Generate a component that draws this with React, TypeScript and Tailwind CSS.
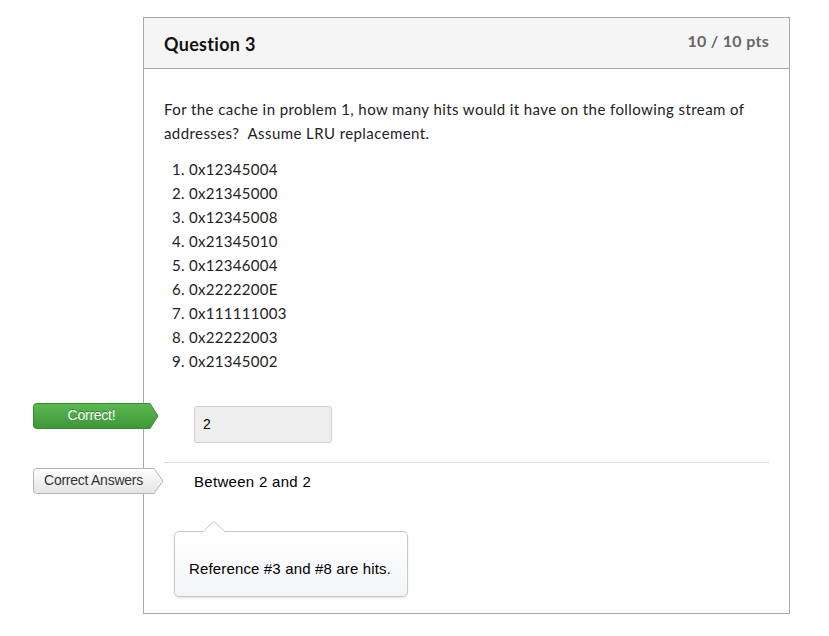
const addresses = [
  "0x12345004",
  "0x21345000",
  "0x12345008",
  "0x21345010",
  "0x12346004",
  "0x2222200E",
  "0x111111003",
  "0x22222003",
  "0x21345002",
];

function Badge({ label, green }: { label: string; green?: boolean }) {
  const w = green ? 126 : 131;
  const body = green ? 117 : 121;
  return (
    <div className="absolute top-0 h-[26px]" style={{ width: w }}>
      <svg width={w} height={26} className="absolute inset-0">
        <defs>
          <linearGradient id={green ? "gGreen" : "gGray"} x1="0" y1="0" x2="0" y2="1">
            <stop offset="0" stopColor={green ? "#5bb94f" : "#ffffff"} />
            <stop offset="1" stopColor={green ? "#3e963a" : "#e4e4e4"} />
          </linearGradient>
        </defs>
        <path
          d={`M3.5 0.5 H${body} L${w - 1} 13 L${body} 25.5 H3.5 Q0.5 25.5 0.5 22.5 V3.5 Q0.5 0.5 3.5 0.5 Z`}
          fill={`url(#${green ? "gGreen" : "gGray"})`}
          stroke={green ? "#3a8a35" : "#b5b5b5"}
        />
      </svg>
      <span
        className={
          "relative flex h-full items-center justify-center pb-px text-[14px] tracking-[-0.25px] font-['Liberation_Sans',Arial,sans-serif] " +
          (green ? "text-white [text-shadow:0_-1px_0_rgba(0,0,0,0.35)]" : "text-[#333]")
        }
        style={{ width: body }}
      >
        {label}
      </span>
    </div>
  );
}

export default function App() {
  return (
    <div className="min-h-[636px] bg-white pt-[17px] pl-[143px] font-['Lato',sans-serif] text-[#222]">
      <div className="w-[647px] border border-[#aaaaaa]">
        {/* header */}
        <div className="flex h-[51px] justify-between border-b border-[#aaaaaa] bg-[#f5f5f5] px-5">
          <h2 className="pt-[14px] text-[18px] font-bold leading-[24px] tracking-[0.3px] text-[#111]">Question 3</h2>
          <span className="pt-[11px] text-[16px] font-bold tracking-[0.3px] text-[#666]">10 / 10 pts</span>
        </div>

        {/* body */}
        <div className="px-5 pt-[28px] pb-4">
          <p className="text-[15px] leading-6 tracking-[0.42px]">
            For the cache in problem 1, how many hits would it have on the following stream of addresses?&nbsp; Assume LRU replacement.
          </p>
          <ol className="mt-3 pl-2 text-[15px] leading-6 tracking-[0.3px]">
            {addresses.map((a, i) => (
              <li key={a}>
                {i + 1}. {a}
              </li>
            ))}
          </ol>

          <div className="relative mt-[33px]">
            <div className="absolute -top-[3px] -left-[131px]">
              <Badge label="Correct!" green />
            </div>
            <div className="ml-[30px] flex h-[37px] w-[138px] items-center rounded-[3px] border border-[#cfcfcf] bg-[#eeeeee] px-2 font-['Liberation_Sans',Arial,sans-serif] text-[14px] text-black">
              2
            </div>
          </div>

          <div className="mt-[19px] border-t border-[#dddddd]" />

          <div className="relative mt-[5px] h-[26px]">
            <div className="absolute top-0 -left-[131px]">
              <Badge label="Correct Answers" />
            </div>
            <div className="ml-[30px] pt-px font-['Liberation_Sans',Arial,sans-serif] text-[15px] leading-[26px] tracking-[0.3px] text-black">
              Between 2 and 2
            </div>
          </div>

          <div className="relative mt-[37px] ml-[10px] w-[234px] rounded-[5px] border border-[#c3c9cf] bg-gradient-to-b from-white to-[#f3f5f7] px-[14px] pt-[28px] pb-[18px] shadow-[0_1px_2px_rgba(0,0,0,0.12)]">
            <svg width="24" height="12" className="absolute -top-[11px] left-[27px]">
              <path d="M0 11.5 L12 0.5 L24 11.5" fill="#ffffff" stroke="#c3c9cf" />
            </svg>
            <p className="whitespace-nowrap font-['Liberation_Sans',Arial,sans-serif] text-[15px] leading-[18px] tracking-[0.15px] text-black">
              Reference #3 and #8 are hits.
            </p>
          </div>
        </div>
      </div>
    </div>
  );
}
